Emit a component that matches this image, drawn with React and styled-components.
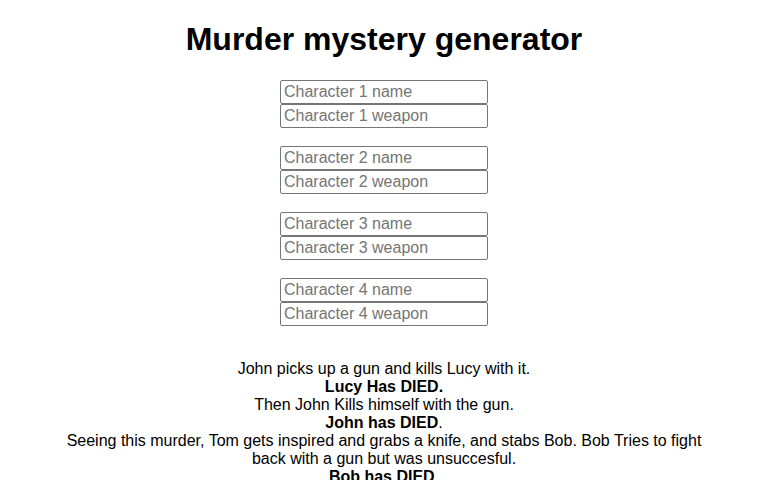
import React from "react";
import styled, { createGlobalStyle } from "styled-components";

const GlobalStyle = createGlobalStyle`
  body {
    margin: 8px;
    background: #ffffff;
    color: #000000;
    font-family: "Liberation Sans", Arial, sans-serif;
  }
`;

const Page = styled.main`
  display: flex;
  flex-direction: column;
  align-items: center;
  text-align: center;
`;

const Title = styled.h1`
  font-size: 32px;
  font-weight: bold;
  margin: 13.44px 0 21.44px;
  line-height: normal;
`;

const Form = styled.form`
  display: flex;
  flex-direction: column;
  align-items: center;
  gap: 18px;
`;

const Group = styled.div`
  display: flex;
  flex-direction: column;
`;

const Field = styled.input`
  box-sizing: border-box;
  width: 208px;
  height: 24px;
  margin: 0;
  padding: 1px 3px;
  border: 1px solid #767676;
  border-radius: 2px;
  font-family: "Liberation Sans", Arial, sans-serif;
  font-size: 16px;
  color: #000;
  background: #fff;
  &::placeholder {
    color: #757575;
  }
`;

const Story = styled.div`
  margin-top: 34px;
  font-size: 16px;
  line-height: 18px;
  max-width: 660px;
`;

const Line = styled.div``;

const characters = [1, 2, 3, 4];

export default function App() {
  return (
    <>
      <GlobalStyle />
      <Page>
        <Title>Murder mystery generator</Title>
        <Form onSubmit={(e) => e.preventDefault()}>
          {characters.map((n) => (
            <Group key={n}>
              <Field type="text" placeholder={`Character ${n} name`} />
              <Field type="text" placeholder={`Character ${n} weapon`} />
            </Group>
          ))}
        </Form>
        <Story>
          <Line>John picks up a gun and kills Lucy with it.</Line>
          <Line>
            <b>Lucy Has DIED.</b>
          </Line>
          <Line>Then John Kills himself with the gun.</Line>
          <Line>
            <b>John has DIED</b>.
          </Line>
          <Line>
            Seeing this murder, Tom gets inspired and grabs a knife, and stabs
            Bob. Bob Tries to fight back with a gun but was unsuccesful.
          </Line>
          <Line>
            <b>Bob has DIED</b>.
          </Line>
        </Story>
      </Page>
    </>
  );
}
